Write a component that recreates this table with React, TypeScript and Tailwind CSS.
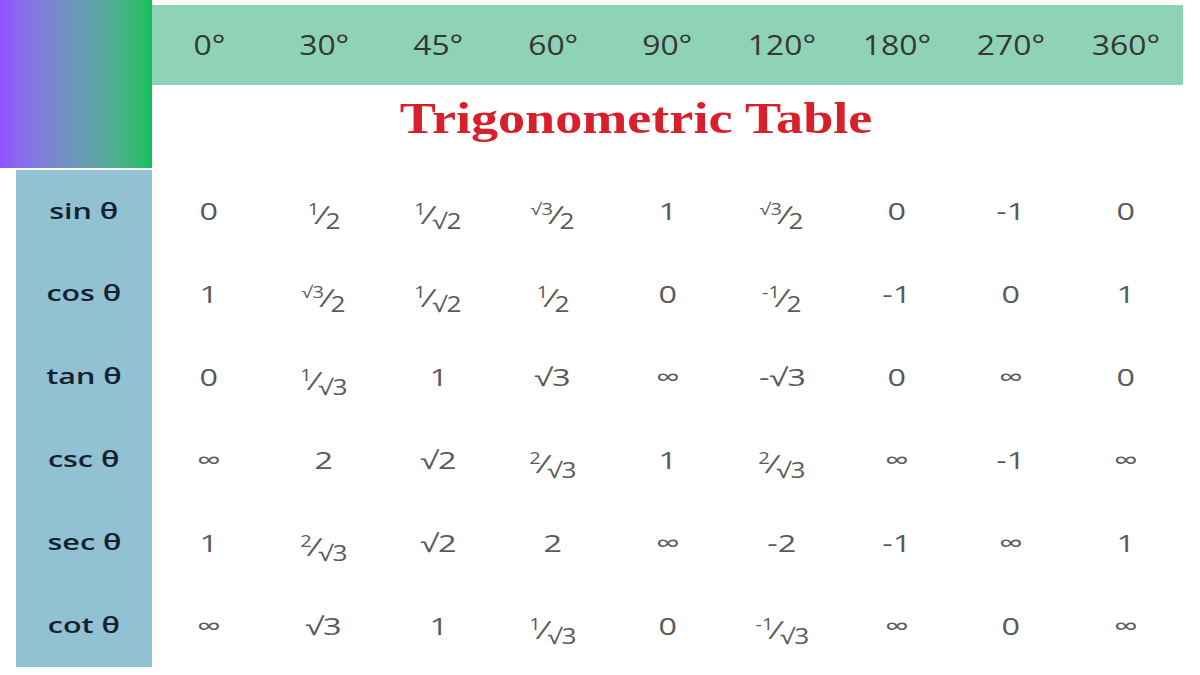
import React from "react";

type Cell = string | { n: string; d: string };

const angles = ["0°", "30°", "45°", "60°", "90°", "120°", "180°", "270°", "360°"];

const rows: { label: string; vals: Cell[] }[] = [
  { label: "sin θ", vals: ["0", { n: "1", d: "2" }, { n: "1", d: "√2" }, { n: "√3", d: "2" }, "1", { n: "√3", d: "2" }, "0", "-1", "0"] },
  { label: "cos θ", vals: ["1", { n: "√3", d: "2" }, { n: "1", d: "√2" }, { n: "1", d: "2" }, "0", { n: "-1", d: "2" }, "-1", "0", "1"] },
  { label: "tan θ", vals: ["0", { n: "1", d: "√3" }, "1", "√3", "∞", "-√3", "0", "∞", "0"] },
  { label: "csc θ", vals: ["∞", "2", "√2", { n: "2", d: "√3" }, "1", { n: "2", d: "√3" }, "∞", "-1", "∞"] },
  { label: "sec θ", vals: ["1", { n: "2", d: "√3" }, "√2", "2", "∞", "-2", "-1", "∞", "1"] },
  { label: "cot θ", vals: ["∞", "√3", "1", { n: "1", d: "√3" }, "0", { n: "-1", d: "√3" }, "∞", "0", "∞"] },
];

function Val({ v }: { v: Cell }) {
  if (typeof v === "string") {
    return (
      <span className={"inline-block scale-x-[1.35] " + (v === "∞" ? "text-[25px]" : "")}>{v}</span>
    );
  }
  return (
    <span className="inline-flex items-start leading-none scale-x-[1.25] relative top-[-3px]">
      <span className="text-[16px] relative top-[-1px]">{v.n}</span>
      <span className="text-[25px] mx-[-2px] relative top-[0px] skew-x-[-12deg] inline-block">/</span>
      <span className="text-[21px] relative top-[9px]">{v.d}</span>
    </span>
  );
}

export default function App() {
  return (
    <div className="w-[1200px] h-[675px] bg-white overflow-hidden" style={{ fontFamily: '"Open Sans", "Noto Sans", sans-serif' }}>
      <div className="flex">
        <div className="w-[152px] h-[168px] bg-gradient-to-r from-[#9250ff] to-[#05c25a]" />
        <div className="w-[1031px] flex flex-col">
          <div className="mt-[5px] h-[80px] bg-[#8fd3b6] grid grid-cols-9 items-center text-[27px] text-[#363636]">
            {angles.map((a) => (
              <div key={a} className="text-center">
                <span className="inline-block scale-x-[1.18]">{a}</span>
              </div>
            ))}
          </div>
          <div className="h-[83px] flex items-center justify-center">
            <span
              className="inline-block scale-x-[1.23] text-[44px] font-bold text-[#d7202b] leading-none ml-[-63px] mt-[-16px]"
              style={{ fontFamily: '"Liberation Serif", "DejaVu Serif", serif' }}
            >
              Trigonometric Table
            </span>
          </div>
        </div>
      </div>
      <div className="flex mt-[2px]">
        <div className="ml-[16px] w-[136px] h-[497px] bg-[#92c1d3] flex flex-col">
          {rows.map((r) => (
            <div key={r.label} className="flex-1 flex items-center justify-center text-[21px] text-[#13222f] font-semibold">
              <span className="inline-block scale-x-[1.45]">{r.label}</span>
            </div>
          ))}
        </div>
        <div className="w-[1031px] h-[497px] flex flex-col">
          {rows.map((r) => (
            <div key={r.label} className="flex-1 grid grid-cols-9 items-center text-[24px] text-[#5a5a5a]">
              {r.vals.map((v, i) => (
                <div key={i} className="text-center">
                  <Val v={v} />
                </div>
              ))}
            </div>
          ))}
        </div>
      </div>
    </div>
  );
}
